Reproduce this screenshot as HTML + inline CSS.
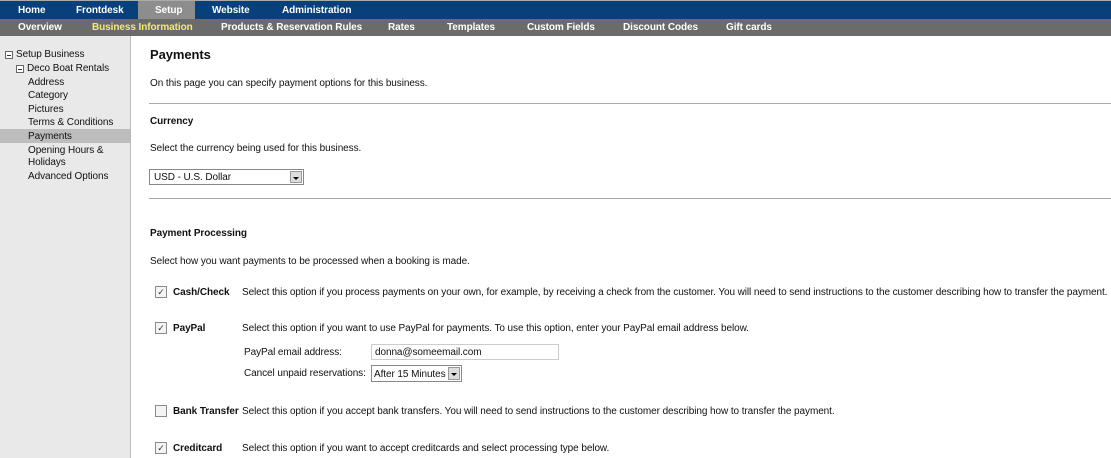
<html><head><style>
body{margin:0;width:1111px;height:458px;overflow:hidden;background:#fff;font-family:"Liberation Sans",Arial,sans-serif;font-size:10px;color:#111;position:relative;letter-spacing:-0.08px}
.a{position:absolute;white-space:nowrap}
.top{position:absolute;left:0;top:0;width:1111px;height:19px;background:#07407a;border-top:1px solid #aaa;box-sizing:border-box}
.sub{position:absolute;left:0;top:19px;width:1111px;height:17px;background:#6b6b6b}
.n{color:#fff;font-weight:bold;font-size:10px}
.side{position:absolute;left:0;top:36px;width:130px;height:422px;background:#e9e9e9;border-right:1px solid #bbb}
.b{font-weight:bold}
.hr{position:absolute;left:149px;width:962px;height:1px;background:#aaa}
.cb{position:absolute;width:10px;height:10px;border:1px solid #8a8a8a;background:#f4f4f4;font-size:9px;line-height:10px;text-align:center;color:#335}
.sel{position:absolute;border:1px solid #888;background:#fff;box-sizing:border-box}
.arr{position:absolute;right:1px;top:1px;width:12px;bottom:1px;background:#ddd;border:1px solid #999;box-sizing:border-box}
.arr:after{content:"";position:absolute;left:2px;top:5px;border-left:3px solid transparent;border-right:3px solid transparent;border-top:3px solid #000}
.box{position:absolute;width:8px;height:8px;border:1px solid #666;box-sizing:border-box;background:#fff}
.box:after{content:"";position:absolute;left:1px;top:3px;width:4px;height:1px;background:#333}
</style></head><body>
<div class="top"></div>
<div class="a" style="left:138px;top:1px;width:57px;height:18px;background:#8d8d8d"></div>
<div class="a n" style="left:18px;top:5px">Home</div>
<div class="a n" style="left:76px;top:5px">Frontdesk</div>
<div class="a n" style="left:155px;top:5px">Setup</div>
<div class="a n" style="left:212px;top:5px">Website</div>
<div class="a n" style="left:282px;top:5px">Administration</div>
<div class="sub"></div>
<div class="a n" style="left:18px;top:22px">Overview</div>
<div class="a n" style="left:92px;top:22px;color:#f0ee6a">Business Information</div>
<div class="a n" style="left:221px;top:22px">Products &amp; Reservation Rules</div>
<div class="a n" style="left:388px;top:22px">Rates</div>
<div class="a n" style="left:447px;top:22px">Templates</div>
<div class="a n" style="left:527px;top:22px">Custom Fields</div>
<div class="a n" style="left:623px;top:22px">Discount Codes</div>
<div class="a n" style="left:726px;top:22px">Gift cards</div>
<div class="side"></div>
<div class="a" style="left:0;top:129px;width:130px;height:14px;background:#bdbdbd"></div>
<div class="box" style="left:5px;top:51px"></div>
<div class="a" style="left:16px;top:49px">Setup Business</div>
<div class="box" style="left:16px;top:65px"></div>
<div class="a" style="left:27px;top:63px">Deco Boat Rentals</div>
<div class="a" style="left:28px;top:77px">Address</div>
<div class="a" style="left:28px;top:90px">Category</div>
<div class="a" style="left:28px;top:104px">Pictures</div>
<div class="a" style="left:28px;top:117px">Terms &amp; Conditions</div>
<div class="a" style="left:28px;top:131px">Payments</div>
<div class="a" style="left:28px;top:145px">Opening Hours &amp;</div>
<div class="a" style="left:28px;top:157px">Holidays</div>
<div class="a" style="left:28px;top:171px">Advanced Options</div>
<div class="a b" style="left:150px;top:47px;font-size:13px">Payments</div>
<div class="a" style="left:150px;top:78px">On this page you can specify payment options for this business.</div>
<div class="hr" style="top:103px"></div>
<div class="a b" style="left:150px;top:116px">Currency</div>
<div class="a" style="left:150px;top:143px">Select the currency being used for this business.</div>
<div class="sel" style="left:149px;top:169px;width:155px;height:16px"><span class="a" style="left:4px;top:2px">USD - U.S. Dollar</span><div class="arr"></div></div>
<div class="hr" style="top:198px"></div>
<div class="a b" style="left:150px;top:228px">Payment Processing</div>
<div class="a" style="left:150px;top:256px">Select how you want payments to be processed when a booking is made.</div>
<div class="cb" style="left:155px;top:286px">✓</div>
<div class="a b" style="left:173px;top:287px">Cash/Check</div>
<div class="a" style="left:242px;top:287px;letter-spacing:-0.09px">Select this option if you process payments on your own, for example, by receiving a check from the customer. You will need to send instructions to the customer describing how to transfer the payment.</div>
<div class="cb" style="left:155px;top:322px">✓</div>
<div class="a b" style="left:173px;top:323px">PayPal</div>
<div class="a" style="left:242px;top:323px">Select this option if you want to use PayPal for payments. To use this option, enter your PayPal email address below.</div>
<div class="a" style="left:244px;top:347px">PayPal email address:</div>
<div class="sel" style="left:371px;top:344px;width:188px;height:16px;border-color:#ccc"><span class="a" style="left:3px;top:2px">donna@someemail.com</span></div>
<div class="a" style="left:244px;top:368px">Cancel unpaid reservations:</div>
<div class="sel" style="left:371px;top:365px;width:91px;height:17px"><span class="a" style="left:2px;top:3px">After 15 Minutes</span><div class="arr"></div></div>
<div class="cb" style="left:155px;top:405px"></div>
<div class="a b" style="left:173px;top:406px">Bank Transfer</div>
<div class="a" style="left:242px;top:406px">Select this option if you accept bank transfers. You will need to send instructions to the customer describing how to transfer the payment.</div>
<div class="cb" style="left:155px;top:442px">✓</div>
<div class="a b" style="left:173px;top:443px">Creditcard</div>
<div class="a" style="left:242px;top:443px">Select this option if you want to accept creditcards and select processing type below.</div>
</body></html>
